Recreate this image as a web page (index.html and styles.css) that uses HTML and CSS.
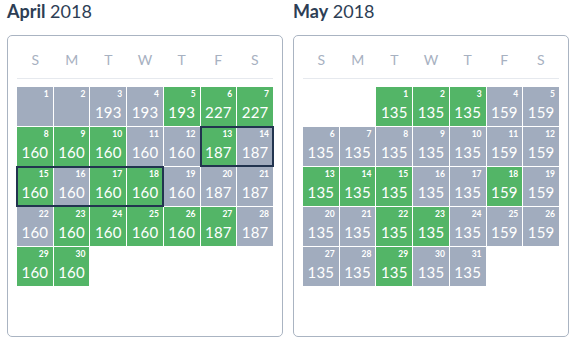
FILE: index.html
```html
<!DOCTYPE html>
<html>
<head>
<meta charset="utf-8">
<link rel="stylesheet" href="styles.css">
</head>
<body>
<div class="months">
  <section class="month">
    <h2 class="title"><b>April</b> 2018</h2>
    <div class="card">
      <div class="dow"><span>S</span><span>M</span><span>T</span><span>W</span><span>T</span><span>F</span><span>S</span></div>
      <div class="grid">
        <div class="cell gray"><span class="d">1</span><span class="p"></span></div>
        <div class="cell gray"><span class="d">2</span><span class="p"></span></div>
        <div class="cell gray"><span class="d">3</span><span class="p">193</span></div>
        <div class="cell gray"><span class="d">4</span><span class="p">193</span></div>
        <div class="cell green"><span class="d">5</span><span class="p">193</span></div>
        <div class="cell green"><span class="d">6</span><span class="p">227</span></div>
        <div class="cell green"><span class="d">7</span><span class="p">227</span></div>

        <div class="cell green"><span class="d">8</span><span class="p">160</span></div>
        <div class="cell green"><span class="d">9</span><span class="p">160</span></div>
        <div class="cell green"><span class="d">10</span><span class="p">160</span></div>
        <div class="cell gray"><span class="d">11</span><span class="p">160</span></div>
        <div class="cell gray"><span class="d">12</span><span class="p">160</span></div>
        <div class="cell green"><span class="d">13</span><span class="p">187</span></div>
        <div class="cell gray"><span class="d">14</span><span class="p">187</span></div>

        <div class="cell green"><span class="d">15</span><span class="p">160</span></div>
        <div class="cell gray"><span class="d">16</span><span class="p">160</span></div>
        <div class="cell green"><span class="d">17</span><span class="p">160</span></div>
        <div class="cell green"><span class="d">18</span><span class="p">160</span></div>
        <div class="cell gray"><span class="d">19</span><span class="p">160</span></div>
        <div class="cell gray"><span class="d">20</span><span class="p">187</span></div>
        <div class="cell gray"><span class="d">21</span><span class="p">187</span></div>

        <div class="cell gray"><span class="d">22</span><span class="p">160</span></div>
        <div class="cell green"><span class="d">23</span><span class="p">160</span></div>
        <div class="cell green"><span class="d">24</span><span class="p">160</span></div>
        <div class="cell green"><span class="d">25</span><span class="p">160</span></div>
        <div class="cell green"><span class="d">26</span><span class="p">160</span></div>
        <div class="cell green"><span class="d">27</span><span class="p">187</span></div>
        <div class="cell gray"><span class="d">28</span><span class="p">187</span></div>

        <div class="cell green"><span class="d">29</span><span class="p">160</span></div>
        <div class="cell green"><span class="d">30</span><span class="p">160</span></div>

        <div class="sel sel-a"></div>
        <div class="sel sel-b"></div>
      </div>
    </div>
  </section>

  <section class="month">
    <h2 class="title"><b>May</b> 2018</h2>
    <div class="card">
      <div class="dow"><span>S</span><span>M</span><span>T</span><span>W</span><span>T</span><span>F</span><span>S</span></div>
      <div class="grid">
        <div class="cell blank"></div>
        <div class="cell blank"></div>
        <div class="cell green"><span class="d">1</span><span class="p">135</span></div>
        <div class="cell green"><span class="d">2</span><span class="p">135</span></div>
        <div class="cell green"><span class="d">3</span><span class="p">135</span></div>
        <div class="cell gray"><span class="d">4</span><span class="p">159</span></div>
        <div class="cell gray"><span class="d">5</span><span class="p">159</span></div>

        <div class="cell gray"><span class="d">6</span><span class="p">135</span></div>
        <div class="cell gray"><span class="d">7</span><span class="p">135</span></div>
        <div class="cell gray"><span class="d">8</span><span class="p">135</span></div>
        <div class="cell gray"><span class="d">9</span><span class="p">135</span></div>
        <div class="cell gray"><span class="d">10</span><span class="p">135</span></div>
        <div class="cell gray"><span class="d">11</span><span class="p">159</span></div>
        <div class="cell gray"><span class="d">12</span><span class="p">159</span></div>

        <div class="cell green"><span class="d">13</span><span class="p">135</span></div>
        <div class="cell green"><span class="d">14</span><span class="p">135</span></div>
        <div class="cell green"><span class="d">15</span><span class="p">135</span></div>
        <div class="cell gray"><span class="d">16</span><span class="p">135</span></div>
        <div class="cell gray"><span class="d">17</span><span class="p">135</span></div>
        <div class="cell green"><span class="d">18</span><span class="p">159</span></div>
        <div class="cell gray"><span class="d">19</span><span class="p">159</span></div>

        <div class="cell gray"><span class="d">20</span><span class="p">135</span></div>
        <div class="cell gray"><span class="d">21</span><span class="p">135</span></div>
        <div class="cell green"><span class="d">22</span><span class="p">135</span></div>
        <div class="cell green"><span class="d">23</span><span class="p">135</span></div>
        <div class="cell gray"><span class="d">24</span><span class="p">135</span></div>
        <div class="cell gray"><span class="d">25</span><span class="p">159</span></div>
        <div class="cell gray"><span class="d">26</span><span class="p">159</span></div>

        <div class="cell gray"><span class="d">27</span><span class="p">135</span></div>
        <div class="cell gray"><span class="d">28</span><span class="p">135</span></div>
        <div class="cell green"><span class="d">29</span><span class="p">135</span></div>
        <div class="cell gray"><span class="d">30</span><span class="p">135</span></div>
        <div class="cell gray"><span class="d">31</span><span class="p">135</span></div>
      </div>
    </div>
  </section>
</div>
</body>
</html>
```

FILE: styles.css
```css
* { box-sizing: border-box; }

body {
  margin: 0;
  background: #ffffff;
  font-family: Lato, "Open Sans", "DejaVu Sans", sans-serif;
  color: #2d3e55;
}

.months {
  display: flex;
  gap: 10px;
  padding: 0 7px;
}

.month {
  width: 276px;
  display: flex;
  flex-direction: column;
}

.title {
  margin: 0 0 13px 0;
  font-size: 18px;
  line-height: 22px;
  font-weight: 400;
  color: #2d3e55;
}

.title b { font-weight: 700; }

.card {
  height: 302px;
  border: 1px solid #aab4c2;
  border-radius: 5px;
  padding: 0 9px;
}

.dow {
  display: grid;
  grid-template-columns: repeat(7, 1fr);
  height: 43px;
  align-items: center;
  border-bottom: 1px solid #e6e9ee;
  margin-bottom: 8px;
  padding-top: 4px;
  font-size: 14px;
  font-weight: 400;
  color: #a7b1c1;
  text-align: center;
}

.grid {
  position: relative;
  display: grid;
  grid-template-columns: repeat(7, 1fr);
  grid-auto-rows: 39px;
  gap: 1px;
}

.cell {
  display: flex;
  flex-direction: column;
  color: #ffffff;
  padding: 2px 4px 0 4px;
}

.cell.green { background: #53b567; }
.cell.gray { background: #a1acbe; }
.cell.blank { background: transparent; }

.d {
  text-align: right;
  font-size: 8.5px;
  line-height: 10px;
  font-weight: 700;
}

.p {
  text-align: center;
  font-size: 15px;
  line-height: 18px;
  margin-top: 4px;
  letter-spacing: 0.2px;
}

.sel {
  position: absolute;
  top: -1px;
  left: -1px;
  right: -1px;
  bottom: -1px;
  border: 2px solid #22344f;
  pointer-events: none;
}

.sel-a { grid-row: 2 / 3; grid-column: 6 / 8; }
.sel-b { grid-row: 3 / 4; grid-column: 1 / 5; }
```
